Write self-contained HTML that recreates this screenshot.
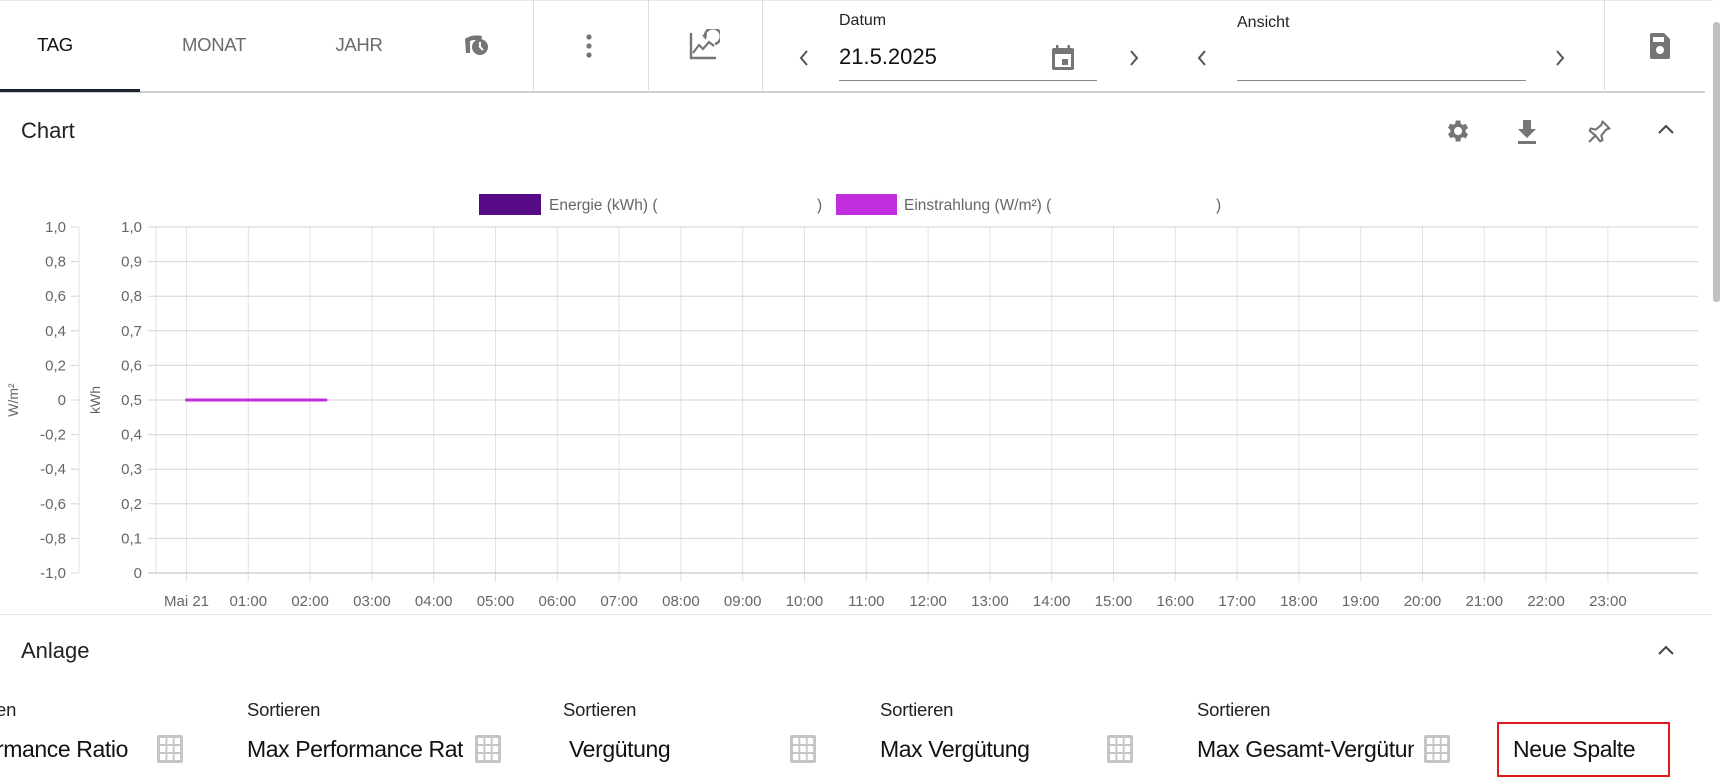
<!DOCTYPE html>
<html><head><meta charset="utf-8"><style>
*{margin:0;padding:0;box-sizing:border-box}
body{width:1720px;height:780px;overflow:hidden;background:#fff;font-family:"Liberation Sans",sans-serif;color:#222;position:relative}
.a{position:absolute;white-space:nowrap}
.tab{font-size:18.5px;font-weight:500;top:34px;transform:translateX(-50%);color:#6b6b6b;letter-spacing:-0.3px}
.vd{position:absolute;top:0;height:92px;width:1px;background:#ddd}
.sort{font-size:18.5px;top:699px;color:#222;letter-spacing:-0.2px}
.val{font-size:23px;top:736px;color:#111;letter-spacing:-0.4px}
.gi{position:absolute;top:734px}
</style></head><body>
<div class="a" style="left:0;top:0;width:1720px;height:1px;background:#e8e8e8"></div>
<div class="a" style="left:0;top:91px;width:1705px;height:2px;background:#cfcfcf"></div>
<div class="a" style="left:0;top:89px;width:140px;height:3px;background:#1d2536"></div>
<div class="a tab" style="left:55px;color:#111">TAG</div>
<div class="a tab" style="left:214px">MONAT</div>
<div class="a tab" style="left:359px">JAHR</div>
<svg class="a" style="left:462px;top:33px" width="30" height="26" viewBox="0 0 30 26"><path d="M3 6 Q10 1 20 3 L19 8 Q12 6 8 8 L8 20 L4 20 Z" fill="#757575"/><circle cx="18" cy="14" r="8" fill="#757575"/><path d="M18 9 L18 14 L21 17" stroke="#fff" stroke-width="2" fill="none"/></svg>
<div class="vd" style="left:533px"></div>
<svg class="a" style="left:584px;top:33px" width="10" height="26"><circle cx="5" cy="4" r="2.6" fill="#757575"/><circle cx="5" cy="13" r="2.6" fill="#757575"/><circle cx="5" cy="22" r="2.6" fill="#757575"/></svg>
<div class="vd" style="left:648px"></div>
<svg class="a" style="left:688px;top:29px" width="32" height="32" viewBox="0 0 32 32"><path d="M3 4 V29 H28" stroke="#757575" stroke-width="2.4" fill="none"/><path d="M5 24 L11 16 L15 20 L21 13 L26 17" stroke="#757575" stroke-width="2.2" fill="none"/><path d="M17 9 A8 8 0 1 1 27 15" stroke="#757575" stroke-width="2.4" fill="none"/><path d="M14 6 L19 5 L18 11 Z" fill="#757575"/></svg>
<div class="vd" style="left:762px"></div>
<div class="a" style="left:839px;top:12px;font-size:16px">Datum</div>
<div class="a" style="left:839px;top:44px;font-size:22px;color:#111">21.5.2025</div>
<div class="a" style="left:839px;top:80px;width:258px;height:1px;background:#8a8a8a"></div>
<svg class="a" style="left:797px;top:48px" width="14" height="20"><path d="M10 3 L4 10 L10 17" stroke="#555" stroke-width="2" fill="none"/></svg>
<svg class="a" style="left:1050px;top:42px" width="26" height="30" viewBox="0 0 26 30"><rect x="2" y="6" width="22" height="22" rx="2" fill="#757575"/><rect x="6" y="3" width="2.5" height="5" fill="#757575"/><rect x="17.5" y="3" width="2.5" height="5" fill="#757575"/><rect x="5" y="12" width="16" height="13" fill="#fff"/><rect x="12" y="17" width="6" height="6" fill="#757575"/></svg>
<svg class="a" style="left:1127px;top:48px" width="14" height="20"><path d="M4 3 L10 10 L4 17" stroke="#555" stroke-width="2" fill="none"/></svg>
<svg class="a" style="left:1195px;top:48px" width="14" height="20"><path d="M10 3 L4 10 L10 17" stroke="#555" stroke-width="2" fill="none"/></svg>
<div class="a" style="left:1237px;top:14px;font-size:16px">Ansicht</div>
<div class="a" style="left:1237px;top:80px;width:289px;height:1px;background:#8a8a8a"></div>
<svg class="a" style="left:1553px;top:48px" width="14" height="20"><path d="M4 3 L10 10 L4 17" stroke="#555" stroke-width="2" fill="none"/></svg>
<div class="vd" style="left:1604px"></div>
<svg class="a" style="left:1648px;top:32px" width="24" height="28" viewBox="0 0 24 28"><path d="M2 3 Q2 1 4 1 L16 1 L22 7 L22 25 Q22 27 20 27 L4 27 Q2 27 2 25 Z" fill="#757575"/><rect x="5" y="5" width="11" height="5" fill="#fff"/><circle cx="12" cy="18" r="4" fill="#fff"/></svg>
<div class="a" style="left:1713px;top:0;width:7px;height:780px;background:#fff"></div>
<div class="a" style="left:1713px;top:22px;width:7px;height:280px;background:#c1c1c1;border-radius:3px"></div>

<div class="a" style="left:21px;top:118px;font-size:22px;color:#222">Chart</div>
<svg class="a" style="left:1443px;top:117px" width="28" height="28" viewBox="0 0 24 24"><path fill="#757575" d="M19.4 13a7.8 7.8 0 0 0 0-2l2.1-1.6-2-3.5-2.5 1a7 7 0 0 0-1.7-1L14.9 3h-4l-.4 2.7a7 7 0 0 0-1.7 1l-2.5-1-2 3.5L6.4 11a7.8 7.8 0 0 0 0 2l-2.1 1.6 2 3.5 2.5-1a7 7 0 0 0 1.7 1l.4 2.9h4l.4-2.7a7 7 0 0 0 1.7-1l2.5 1 2-3.5zM12.9 15.5a3.5 3.5 0 1 1 0-7 3.5 3.5 0 0 1 0 7z"/></svg>
<svg class="a" style="left:1515px;top:118px" width="24" height="28" viewBox="0 0 24 28"><path d="M8 2 H16 V11 H21 L12 20 L3 11 H8 Z" fill="#757575"/><rect x="3" y="23" width="18" height="3" fill="#757575"/></svg>
<svg class="a" style="left:1585px;top:118px" width="28" height="28" viewBox="0 0 24 24"><path d="M15 3 L21 9 L18 10 L14 15 L15 19 L13 20 L9 15 L4 20 L4 20 L9 15 L4 11 L5 9 L9 10 L14 6 Z" stroke="#757575" stroke-width="1.8" fill="none" stroke-linejoin="round"/></svg>
<svg class="a" style="left:1656px;top:122px" width="20" height="14"><path d="M3 11 L10 4 L17 11" stroke="#444" stroke-width="2" fill="none"/></svg>

<svg class="a" style="left:0;top:150px" width="1712" height="470" viewBox="0 150 1712 470" font-family="Liberation Sans, sans-serif" font-size="15" fill="#666">
<rect x="479" y="194" width="62" height="21" fill="#560a85"/>
<text x="549" y="210" font-size="15.5">Energie (kWh) (</text><text x="817" y="210" font-size="15.5">)</text>
<rect x="836" y="194" width="61" height="21" fill="#c02ee0"/>
<text x="904" y="210" font-size="15.5">Einstrahlung (W/m²) (</text><text x="1216" y="210" font-size="15.5">)</text>
<g stroke="#e2e2e2" stroke-width="1">
<line x1="156" y1="227" x2="156" y2="573"/>
<line x1="186.5" y1="227" x2="186.5" y2="582"/><line x1="248.3" y1="227" x2="248.3" y2="582"/><line x1="310.1" y1="227" x2="310.1" y2="582"/><line x1="371.9" y1="227" x2="371.9" y2="582"/><line x1="433.7" y1="227" x2="433.7" y2="582"/><line x1="495.5" y1="227" x2="495.5" y2="582"/><line x1="557.3" y1="227" x2="557.3" y2="582"/><line x1="619.1" y1="227" x2="619.1" y2="582"/><line x1="680.9" y1="227" x2="680.9" y2="582"/><line x1="742.7" y1="227" x2="742.7" y2="582"/><line x1="804.5" y1="227" x2="804.5" y2="582"/><line x1="866.3" y1="227" x2="866.3" y2="582"/><line x1="928.1" y1="227" x2="928.1" y2="582"/><line x1="989.9" y1="227" x2="989.9" y2="582"/><line x1="1051.7" y1="227" x2="1051.7" y2="582"/><line x1="1113.5" y1="227" x2="1113.5" y2="582"/><line x1="1175.3" y1="227" x2="1175.3" y2="582"/><line x1="1237.1" y1="227" x2="1237.1" y2="582"/><line x1="1298.9" y1="227" x2="1298.9" y2="582"/><line x1="1360.7" y1="227" x2="1360.7" y2="582"/><line x1="1422.5" y1="227" x2="1422.5" y2="582"/><line x1="1484.3" y1="227" x2="1484.3" y2="582"/><line x1="1546.1" y1="227" x2="1546.1" y2="582"/><line x1="1607.9" y1="227" x2="1607.9" y2="582"/>
<line x1="79" y1="227" x2="79" y2="573"/>
</g>
<g stroke="#d4d4d4" stroke-width="1">
<line x1="148" y1="227" x2="1698" y2="227"/><line x1="148" y1="261.6" x2="1698" y2="261.6"/><line x1="148" y1="296.2" x2="1698" y2="296.2"/><line x1="148" y1="330.8" x2="1698" y2="330.8"/><line x1="148" y1="365.4" x2="1698" y2="365.4"/><line x1="148" y1="400" x2="1698" y2="400"/><line x1="148" y1="434.6" x2="1698" y2="434.6"/><line x1="148" y1="469.2" x2="1698" y2="469.2"/><line x1="148" y1="503.8" x2="1698" y2="503.8"/><line x1="148" y1="538.4" x2="1698" y2="538.4"/>
<line x1="148" y1="573" x2="1698" y2="573" stroke="#bbb"/>
<line x1="71" y1="227" x2="79" y2="227"/><line x1="71" y1="261.6" x2="79" y2="261.6"/><line x1="71" y1="296.2" x2="79" y2="296.2"/><line x1="71" y1="330.8" x2="79" y2="330.8"/><line x1="71" y1="365.4" x2="79" y2="365.4"/><line x1="71" y1="400" x2="79" y2="400"/><line x1="71" y1="434.6" x2="79" y2="434.6"/><line x1="71" y1="469.2" x2="79" y2="469.2"/><line x1="71" y1="503.8" x2="79" y2="503.8"/><line x1="71" y1="538.4" x2="79" y2="538.4"/><line x1="71" y1="573" x2="79" y2="573"/>
</g>
<g text-anchor="end">
<text x="66" y="232">1,0</text><text x="66" y="266.6">0,8</text><text x="66" y="301.2">0,6</text><text x="66" y="335.8">0,4</text><text x="66" y="370.4">0,2</text><text x="66" y="405">0</text><text x="66" y="439.6">-0,2</text><text x="66" y="474.2">-0,4</text><text x="66" y="508.8">-0,6</text><text x="66" y="543.4">-0,8</text><text x="66" y="578">-1,0</text>
<text x="142" y="232">1,0</text><text x="142" y="266.6">0,9</text><text x="142" y="301.2">0,8</text><text x="142" y="335.8">0,7</text><text x="142" y="370.4">0,6</text><text x="142" y="405">0,5</text><text x="142" y="439.6">0,4</text><text x="142" y="474.2">0,3</text><text x="142" y="508.8">0,2</text><text x="142" y="543.4">0,1</text><text x="142" y="578">0</text>
</g>
<text transform="translate(18,400) rotate(-90)" text-anchor="middle" font-size="14">W/m²</text>
<text transform="translate(100,400) rotate(-90)" text-anchor="middle" font-size="14">kWh</text>
<g text-anchor="middle">
<text x="186.5" y="606">Mai 21</text><text x="248.3" y="606">01:00</text><text x="310.1" y="606">02:00</text><text x="371.9" y="606">03:00</text><text x="433.7" y="606">04:00</text><text x="495.5" y="606">05:00</text><text x="557.3" y="606">06:00</text><text x="619.1" y="606">07:00</text><text x="680.9" y="606">08:00</text><text x="742.7" y="606">09:00</text><text x="804.5" y="606">10:00</text><text x="866.3" y="606">11:00</text><text x="928.1" y="606">12:00</text><text x="989.9" y="606">13:00</text><text x="1051.7" y="606">14:00</text><text x="1113.5" y="606">15:00</text><text x="1175.3" y="606">16:00</text><text x="1237.1" y="606">17:00</text><text x="1298.9" y="606">18:00</text><text x="1360.7" y="606">19:00</text><text x="1422.5" y="606">20:00</text><text x="1484.3" y="606">21:00</text><text x="1546.1" y="606">22:00</text><text x="1607.9" y="606">23:00</text>
</g>
<line x1="186.5" y1="400" x2="326" y2="400" stroke="#c02ee0" stroke-width="3" stroke-linecap="round"/>
</svg>
<div class="a" style="left:0;top:614px;width:1712px;height:1px;background:#e6e6e6"></div>

<div class="a" style="left:21px;top:638px;font-size:22px;color:#222">Anlage</div>
<svg class="a" style="left:1656px;top:643px" width="20" height="14"><path d="M3 11 L10 4 L17 11" stroke="#444" stroke-width="2" fill="none"/></svg>

<div class="a sort" style="left:-4px">en</div>
<div class="a sort" style="left:247px">Sortieren</div>
<div class="a sort" style="left:563px">Sortieren</div>
<div class="a sort" style="left:880px">Sortieren</div>
<div class="a sort" style="left:1197px">Sortieren</div>

<div class="a val" style="left:-4px">rmance Ratio</div>
<div class="a val" style="left:247px;width:216px;overflow:hidden">Max Performance Ratio</div>
<div class="a val" style="left:569px">Vergütung</div>
<div class="a val" style="left:880px">Max Vergütung</div>
<div class="a val" style="left:1197px;width:217px;overflow:hidden">Max Gesamt-Vergütung</div>

<svg class="gi" style="left:156px" width="28" height="30" viewBox="0 0 28 30"><rect x="1" y="1" width="26" height="28" rx="2" fill="#c4c4c4"/><g fill="#fff"><rect x="4" y="4" width="5.5" height="6"/><rect x="11.3" y="4" width="5.5" height="6"/><rect x="18.6" y="4" width="5.5" height="6"/><rect x="4" y="12" width="5.5" height="6"/><rect x="11.3" y="12" width="5.5" height="6"/><rect x="18.6" y="12" width="5.5" height="6"/><rect x="4" y="20" width="5.5" height="6"/><rect x="11.3" y="20" width="5.5" height="6"/><rect x="18.6" y="20" width="5.5" height="6"/></g></svg>
<svg class="gi" style="left:474px" width="28" height="30" viewBox="0 0 28 30"><rect x="1" y="1" width="26" height="28" rx="2" fill="#c4c4c4"/><g fill="#fff"><rect x="4" y="4" width="5.5" height="6"/><rect x="11.3" y="4" width="5.5" height="6"/><rect x="18.6" y="4" width="5.5" height="6"/><rect x="4" y="12" width="5.5" height="6"/><rect x="11.3" y="12" width="5.5" height="6"/><rect x="18.6" y="12" width="5.5" height="6"/><rect x="4" y="20" width="5.5" height="6"/><rect x="11.3" y="20" width="5.5" height="6"/><rect x="18.6" y="20" width="5.5" height="6"/></g></svg>
<svg class="gi" style="left:789px" width="28" height="30" viewBox="0 0 28 30"><rect x="1" y="1" width="26" height="28" rx="2" fill="#c4c4c4"/><g fill="#fff"><rect x="4" y="4" width="5.5" height="6"/><rect x="11.3" y="4" width="5.5" height="6"/><rect x="18.6" y="4" width="5.5" height="6"/><rect x="4" y="12" width="5.5" height="6"/><rect x="11.3" y="12" width="5.5" height="6"/><rect x="18.6" y="12" width="5.5" height="6"/><rect x="4" y="20" width="5.5" height="6"/><rect x="11.3" y="20" width="5.5" height="6"/><rect x="18.6" y="20" width="5.5" height="6"/></g></svg>
<svg class="gi" style="left:1106px" width="28" height="30" viewBox="0 0 28 30"><rect x="1" y="1" width="26" height="28" rx="2" fill="#c4c4c4"/><g fill="#fff"><rect x="4" y="4" width="5.5" height="6"/><rect x="11.3" y="4" width="5.5" height="6"/><rect x="18.6" y="4" width="5.5" height="6"/><rect x="4" y="12" width="5.5" height="6"/><rect x="11.3" y="12" width="5.5" height="6"/><rect x="18.6" y="12" width="5.5" height="6"/><rect x="4" y="20" width="5.5" height="6"/><rect x="11.3" y="20" width="5.5" height="6"/><rect x="18.6" y="20" width="5.5" height="6"/></g></svg>
<svg class="gi" style="left:1423px" width="28" height="30" viewBox="0 0 28 30"><rect x="1" y="1" width="26" height="28" rx="2" fill="#c4c4c4"/><g fill="#fff"><rect x="4" y="4" width="5.5" height="6"/><rect x="11.3" y="4" width="5.5" height="6"/><rect x="18.6" y="4" width="5.5" height="6"/><rect x="4" y="12" width="5.5" height="6"/><rect x="11.3" y="12" width="5.5" height="6"/><rect x="18.6" y="12" width="5.5" height="6"/><rect x="4" y="20" width="5.5" height="6"/><rect x="11.3" y="20" width="5.5" height="6"/><rect x="18.6" y="20" width="5.5" height="6"/></g></svg>

<div class="a" style="left:1497px;top:722px;width:173px;height:55px;border:2.5px solid #e0191e"></div>
<div class="a val" style="left:1513px">Neue Spalte</div>
</body></html>
